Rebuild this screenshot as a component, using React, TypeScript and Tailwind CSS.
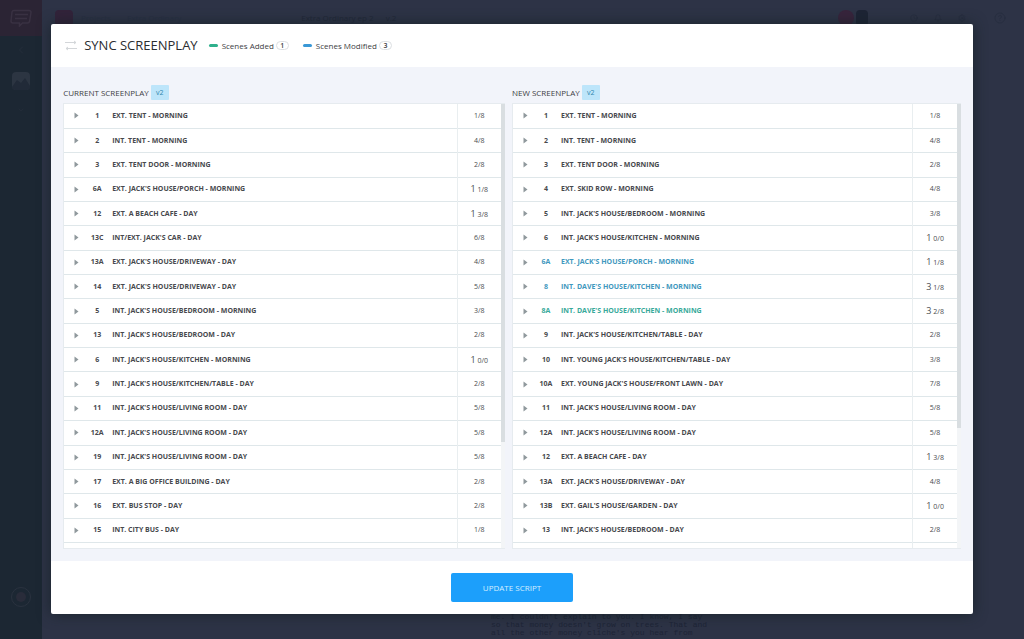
import React from 'react';
import { Bell, ChevronDown, ChevronLeft, CircleHelp, Clock, Settings } from 'lucide-react';
import clsx from 'clsx';

type Status = 'added' | 'modified';

interface Scene {
  num: string;
  title: string;
  pages?: string;
  eighths: string;
  status?: Status;
}

const CURRENT_SCENES: Scene[] = [
  { num: '1', title: 'EXT. TENT - MORNING', eighths: '1/8' },
  { num: '2', title: 'INT. TENT - MORNING', eighths: '4/8' },
  { num: '3', title: 'EXT. TENT DOOR - MORNING', eighths: '2/8' },
  { num: '6A', title: "EXT. JACK'S HOUSE/PORCH - MORNING", pages: '1', eighths: '1/8' },
  { num: '12', title: 'EXT. A BEACH CAFE - DAY', pages: '1', eighths: '3/8' },
  { num: '13C', title: "INT/EXT. JACK'S CAR - DAY", eighths: '6/8' },
  { num: '13A', title: "EXT. JACK'S HOUSE/DRIVEWAY - DAY", eighths: '4/8' },
  { num: '14', title: "EXT. JACK'S HOUSE/DRIVEWAY - DAY", eighths: '5/8' },
  { num: '5', title: "INT. JACK'S HOUSE/BEDROOM - MORNING", eighths: '3/8' },
  { num: '13', title: "INT. JACK'S HOUSE/BEDROOM - DAY", eighths: '2/8' },
  { num: '6', title: "INT. JACK'S HOUSE/KITCHEN - MORNING", pages: '1', eighths: '0/0' },
  { num: '9', title: "INT. JACK'S HOUSE/KITCHEN/TABLE - DAY", eighths: '2/8' },
  { num: '11', title: "INT. JACK'S HOUSE/LIVING ROOM - DAY", eighths: '5/8' },
  { num: '12A', title: "INT. JACK'S HOUSE/LIVING ROOM - DAY", eighths: '5/8' },
  { num: '19', title: "INT. JACK'S HOUSE/LIVING ROOM - DAY", eighths: '5/8' },
  { num: '17', title: 'EXT. A BIG OFFICE BUILDING - DAY', eighths: '2/8' },
  { num: '16', title: 'EXT. BUS STOP - DAY', eighths: '2/8' },
  { num: '15', title: 'INT. CITY BUS - DAY', eighths: '1/8' },
];

const NEW_SCENES: Scene[] = [
  { num: '1', title: 'EXT. TENT - MORNING', eighths: '1/8' },
  { num: '2', title: 'INT. TENT - MORNING', eighths: '4/8' },
  { num: '3', title: 'EXT. TENT DOOR - MORNING', eighths: '2/8' },
  { num: '4', title: 'EXT. SKID ROW - MORNING', eighths: '4/8' },
  { num: '5', title: "INT. JACK'S HOUSE/BEDROOM - MORNING", eighths: '3/8' },
  { num: '6', title: "INT. JACK'S HOUSE/KITCHEN - MORNING", pages: '1', eighths: '0/0' },
  { num: '6A', title: "EXT. JACK'S HOUSE/PORCH - MORNING", pages: '1', eighths: '1/8', status: 'modified' },
  { num: '8', title: "INT. DAVE'S HOUSE/KITCHEN - MORNING", pages: '3', eighths: '1/8', status: 'modified' },
  { num: '8A', title: "INT. DAVE'S HOUSE/KITCHEN - MORNING", pages: '3', eighths: '2/8', status: 'added' },
  { num: '9', title: "INT. JACK'S HOUSE/KITCHEN/TABLE - DAY", eighths: '2/8' },
  { num: '10', title: "INT. YOUNG JACK'S HOUSE/KITCHEN/TABLE - DAY", eighths: '3/8' },
  { num: '10A', title: "EXT. YOUNG JACK'S HOUSE/FRONT LAWN - DAY", eighths: '7/8' },
  { num: '11', title: "INT. JACK'S HOUSE/LIVING ROOM - DAY", eighths: '5/8' },
  { num: '12A', title: "INT. JACK'S HOUSE/LIVING ROOM - DAY", eighths: '5/8' },
  { num: '12', title: 'EXT. A BEACH CAFE - DAY', pages: '1', eighths: '3/8' },
  { num: '13A', title: "EXT. JACK'S HOUSE/DRIVEWAY - DAY", eighths: '4/8' },
  { num: '13B', title: "EXT. GAIL'S HOUSE/GARDEN - DAY", pages: '1', eighths: '0/0' },
  { num: '13', title: "INT. JACK'S HOUSE/BEDROOM - DAY", eighths: '2/8' },
];

const SyncIcon = () => (
  <svg width="12" height="11" viewBox="0 0 12 11" fill="none" stroke="#d3d6d9" strokeWidth="1">
    <path d="M0 2.5h11M9 1l2 1.5-2 1.5" />
    <path d="M12 8.5H1M3 7L1 8.5l2 1.5" />
  </svg>
);

const Legend: React.FC<{ label: string; count: number; status: Status }> = ({ label, count, status }) => (
  <div className="flex items-center">
    <span className={clsx('mr-1 h-[3px] w-[9px] rounded-full', status === 'added' ? 'bg-[#2fb08c]' : 'bg-[#3a98d6]')} />
    <span className="text-[8px]">{label}</span>
    <span className="ml-[2px] flex h-[9px] w-[13px] items-center justify-center rounded-full border border-[#dcdfe2] text-[7px] leading-none font-semibold">
      {count}
    </span>
  </div>
);

const SceneRow: React.FC<{ scene: Scene }> = ({ scene }) => (
  <tr
    className={clsx(
      'h-6 border-b border-[#dfe7ea]',
      !scene.status && 'text-[#47494d]',
      scene.status === 'modified' && 'text-[#3f98be]',
      scene.status === 'added' && 'text-[#38a99a]'
    )}
  >
    <td className="p-0">
      <button type="button" aria-label={`Expand scene ${scene.num}`} className="ml-[10px] block">
        <svg width="5" height="7" viewBox="0 0 5 7">
          <path d="M0.5 0.5L4.5 3.5L0.5 6.5Z" fill="#8f989c" />
        </svg>
      </button>
    </td>
    <td className="p-0 text-center font-bold">{scene.num}</td>
    <td className="p-0 pl-[5px] font-bold">{scene.title}</td>
    <td className="border-l border-[#e9eef0] p-0 text-[#4a4d50]">
      <div className="flex h-3 items-baseline justify-center gap-[2px]">
        {scene.pages && <span className="text-[9px]">{scene.pages}</span>}
        <span>{scene.eighths}</span>
      </div>
    </td>
  </tr>
);

interface ScenePanelProps {
  title: string;
  scenes: Scene[];
  thumb: string;
  className?: string;
}

const ScenePanel: React.FC<ScenePanelProps> = ({ title, scenes, thumb, className }) => (
  <section className={clsx('min-w-0', className)}>
    <div className="mb-[3px] flex items-center gap-[2px]">
      <h2 className="text-[8px] text-[#3d4043]">{title}</h2>
      <span className="flex h-[15px] w-[18px] items-center justify-center rounded-[1px] bg-[#bde5fa] text-[7px] leading-none text-[#2f86ad]">
        v2
      </span>
    </div>
    <div className="flex h-[446px] overflow-hidden border border-r-0 border-[#e6ebef] bg-white">
      <div className="min-w-0 flex-1 overflow-hidden">
        <table aria-label={title} className="h-[463px] w-full table-fixed border-collapse text-[7px] leading-3">
          <colgroup>
            <col className="w-[23px]" />
            <col className="w-5" />
            <col />
            <col className="w-11" />
          </colgroup>
          <tbody>
            {scenes.map((scene) => (
              <SceneRow key={scene.num} scene={scene} />
            ))}
            <tr className="h-6">
              <td colSpan={3} />
              <td className="border-l border-[#e9eef0]" />
            </tr>
          </tbody>
        </table>
      </div>
      <div className="w-1 bg-[#f3f5f7]">
        <div className={clsx('w-full bg-[#d9dee1]', thumb)} />
      </div>
    </div>
  </section>
);

const Backdrop = () => (
  <div className="flex h-full" aria-hidden="true">
    <aside className="flex w-[42px] shrink-0 flex-col items-center bg-[#1c2733] text-[#252e3b]">
      <div className="flex h-9 w-full items-center justify-center bg-[#2b2434]">
        <svg width="22" height="18" viewBox="0 0 22 18" fill="none" stroke="#393142" strokeWidth="1.5">
          <path d="M4 1.5h15a2 2 0 0 1 2 2l-1.5 9a2 2 0 0 1-2 1.5h-5l-3 3v-3H3a2 2 0 0 1-2-2l1-9a2 2 0 0 1 2-1.5Z" />
          <path d="M5 5.5h13M5 9.5h12" />
        </svg>
      </div>
      <ChevronLeft className="mt-2 h-3 w-3" />
      <div className="mt-4 h-[18px] w-[18px] overflow-hidden rounded-sm bg-[#2c3542]">
        <svg width="18" height="18" viewBox="0 0 18 18">
          <path d="M0 15L5 8l4 3 4-5 5 8v4H0Z" fill="#212a38" />
        </svg>
      </div>
      <ChevronDown className="mt-4 h-2 w-2" />
      <div className="mt-auto mb-8 h-5 w-5 rounded-full border border-[#2a323f] p-1">
        <div className="h-full w-full rounded-full bg-[#292c3a]" />
      </div>
    </aside>
    <main className="flex min-w-0 flex-1 flex-col justify-between bg-[#2d3346]">
      <div className="flex h-9 items-center pr-[18px] pl-[13px] text-[8px] text-[#222839]">
        <span className="h-4 w-[18px] rounded-sm bg-[#32233a]" />
        <span className="ml-2 text-[#283044]">Projects</span>
        <span className="ml-4 text-[#283044]">Extra Ordinary</span>
        <span className="ml-30">Extra Ordinary ep 2</span>
        <span className="ml-3">v.2</span>
        <div className="ml-auto flex items-center gap-[2px]">
          <span className="h-4 w-4 rounded-full bg-[#38243c]" />
          <span className="h-4 w-3 rounded-sm bg-[#1d2435]" />
          <div className="ml-10 flex items-center gap-4 text-[#272e40]">
            <Clock className="h-2 w-2" />
            <Bell className="h-2 w-2" />
            <Settings className="h-2 w-2" />
            <CircleHelp className="ml-3 h-3 w-3" />
          </div>
        </div>
      </div>
      <p className="ml-[449px] pb-[2px] font-['Liberation_Mono',monospace] text-[8px] leading-2 whitespace-pre text-[#1e2436]">
        {"me. I couldn't explain to you. I know, I say\nso that money doesn't grow on trees. That and\nall the other money cliche's you hear from"}
      </p>
    </main>
  </div>
);

export default function App() {
  return (
    <div className="relative h-screen overflow-hidden font-['Open_Sans',sans-serif]">
      <Backdrop />

      <div className="absolute inset-0 flex items-start justify-center pt-6">
        <div
          role="dialog"
          aria-labelledby="sync-title"
          className="w-[90%] overflow-hidden rounded-[2px] bg-white text-[#3d4043] shadow-[0_0_14px_rgba(20,32,36,0.8)]"
        >
          <header className="flex h-[43px] items-center pl-[14px]">
            <SyncIcon />
            <h1 id="sync-title" className="ml-[7px] text-[13px] text-[#2b2d30]">
              SYNC SCREENPLAY
            </h1>
            <div className="ml-[11px] flex gap-[14px]">
              <Legend label="Scenes Added" count={1} status="added" />
              <Legend label="Scenes Modified" count={3} status="modified" />
            </div>
          </header>

          <div className="grid grid-cols-2 bg-[#f2f4fa] px-3 pt-[18px] pb-3">
            <ScenePanel title="CURRENT SCREENPLAY" scenes={CURRENT_SCENES} thumb="h-[338px]" className="pr-[7px]" />
            <ScenePanel title="NEW SCREENPLAY" scenes={NEW_SCENES} thumb="h-[324px]" />
          </div>

          <footer className="flex justify-center py-3">
            <button type="button" className="h-[29px] w-[122px] rounded-[2px] bg-[#1c9ffb] text-[8px] text-[#d5eeff]">
              UPDATE SCRIPT
            </button>
          </footer>
        </div>
      </div>
    </div>
  );
}
